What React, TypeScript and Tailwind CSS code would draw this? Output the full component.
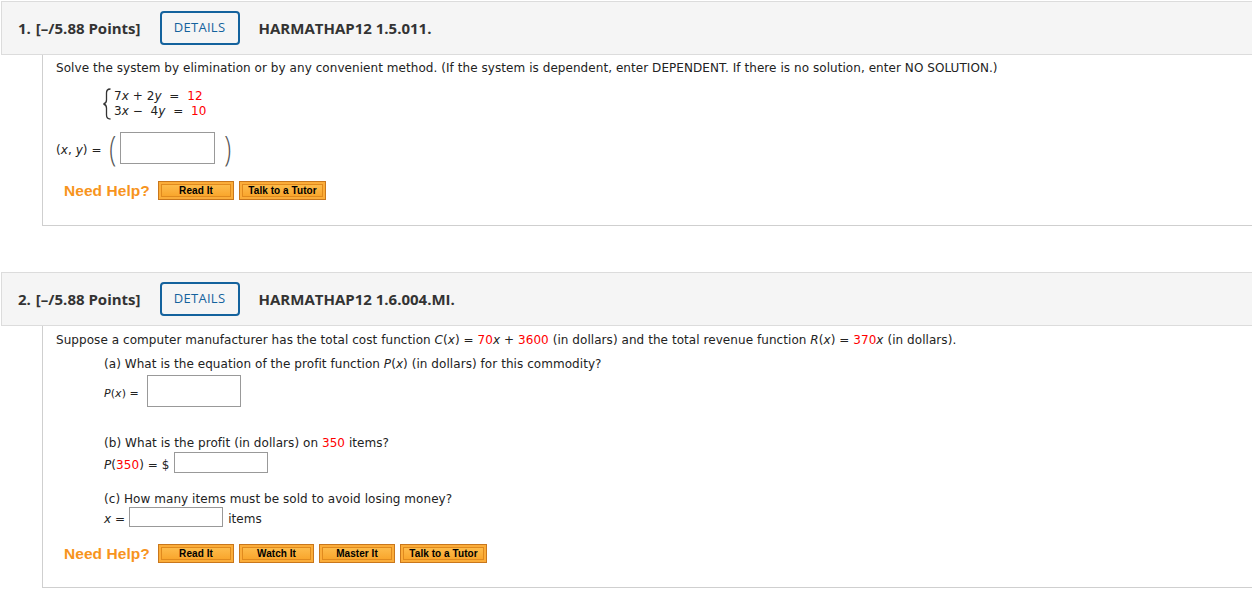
import React from "react";

const body = { fontFamily: '"DejaVu Sans", Verdana, sans-serif' } as const;
const head = { fontFamily: '"Open Sans", "Noto Sans", sans-serif' } as const;
const arial = { fontFamily: '"Liberation Sans", Arial, sans-serif' } as const;

function Header({ num, code }: { num: string; code: string }) {
  return (
    <div
      className="ml-px w-[1262px] h-[54px] bg-[#f5f5f5] border border-[#dcdcdc] flex items-center pl-[16px] text-[#333]"
      style={head}
    >
      <span className="text-[15px] font-bold">{num}.</span>
      <span className="text-[15px] font-bold ml-[5px]">[–/5.88 Points]</span>
      <span className="ml-[19px] h-[34px] w-[80px] border-2 border-[#14629d] rounded-[4px] flex items-center justify-center text-[13px] text-[#14629d] tracking-[0.3px]">
        DETAILS
      </span>
      <span className="ml-[19px] text-[15px] font-bold">{code}</span>
    </div>
  );
}

function HelpBtn({ label, w }: { label: string; w: string }) {
  return (
    <span
      className={`${w} h-[19px] border border-[#c9771c] bg-[#fbad3a] p-[2px] flex`}
      style={arial}
    >
      <span className="flex-1 border border-[#e08a1e] bg-gradient-to-b from-[#fdbb4a] to-[#f9a62c] flex items-center justify-center text-[10px] font-bold text-black leading-none">
        {label}
      </span>
    </span>
  );
}

function NeedHelp({ buttons }: { buttons: { label: string; w: string }[] }) {
  return (
    <div className="flex items-center">
      <span className="text-[15.5px] font-bold text-[#f7941d] ml-[8px] mr-[9px] w-[85px] whitespace-nowrap" style={arial}>
        Need Help?
      </span>
      <div className="flex gap-[5px]">
        {buttons.map((b) => (
          <HelpBtn key={b.label} label={b.label} w={b.w} />
        ))}
      </div>
    </div>
  );
}

const I = ({ children }: { children: React.ReactNode }) => <i className="italic">{children}</i>;
const R = ({ children }: { children: React.ReactNode }) => <span className="text-[#ff0000]">{children}</span>;

function Box({ w, h }: { w: string; h: string }) {
  return <span className={`inline-block ${w} ${h} border border-[#999] bg-white`} />;
}

export default function App() {
  return (
    <div className="w-[1252px] h-[596px] overflow-hidden bg-white text-[#222]" style={body}>
      <div className="pt-px">
        <Header num="1" code="HARMATHAP12 1.5.011." />
        <div className="ml-[42px] w-[1230px] h-[171px] border-l border-b border-[#cfcfcf] pl-[13px] text-[12px] tracking-[0.06px]">
          <div className="pt-[6px] leading-[15px]">
            Solve the system by elimination or by any convenient method. (If the system is dependent, enter DEPENDENT. If there is no solution, enter NO SOLUTION.)
          </div>
          <div className="mt-[12px] ml-[46px] flex items-center">
            <svg width="10" height="32" viewBox="0 0 10 32" className="mr-[2px]">
              <path
                d="M8.5 1 C5 1 4.5 2.5 4.5 5 L4.5 12 C4.5 14.5 3.5 15.5 1.5 16 C3.5 16.5 4.5 17.5 4.5 20 L4.5 27 C4.5 29.5 5 31 8.5 31"
                fill="none"
                stroke="#333"
                strokeWidth="1.3"
              />
            </svg>
            <div className="leading-[15px]">
              <div>
                7<I>x</I> + 2<I>y</I> &nbsp;= &nbsp;<R>12</R>
              </div>
              <div>
                3<I>x</I> − &nbsp;4<I>y</I> &nbsp;= &nbsp;<R>10</R>
              </div>
            </div>
          </div>
          <div className="mt-[14px] flex items-center h-[32px]">
            <span>
              (<I>x</I>, <I>y</I>) =
            </span>
            <span className="ml-[6px] text-[34px] font-extralight text-[#555] leading-none scale-x-75 relative top-[-2px]" style={head}>(</span>
            <span className="ml-[3px]"><Box w="w-[95px]" h="h-[32px]" /></span>
            <span className="ml-[8px] text-[34px] font-extralight text-[#555] leading-none scale-x-75 relative top-[-2px]" style={head}>)</span>
          </div>
          <div className="mt-[13px]">
            <NeedHelp
              buttons={[
                { label: "Read It", w: "w-[76px]" },
                { label: "Talk to a Tutor", w: "w-[87px]" },
              ]}
            />
          </div>
        </div>
      </div>

      <div className="mt-[46px]">
        <Header num="2" code="HARMATHAP12 1.6.004.MI." />
        <div className="ml-[42px] w-[1230px] h-[262px] border-l border-b border-[#cfcfcf] pl-[13px] text-[12px] tracking-[0.06px]">
          <div className="pt-[7px] leading-[15px]">
            Suppose a computer manufacturer has the total cost function <I>C</I>(<I>x</I>) = <R>70</R><I>x</I> + <R>3600</R> (in dollars) and the total revenue function <I>R</I>(<I>x</I>) = <R>370</R><I>x</I> (in dollars).
          </div>
          <div className="ml-[48px]">
            <div className="mt-[9px] leading-[15px]">
              (a) What is the equation of the profit function <I>P</I>(<I>x</I>) (in dollars) for this commodity?
            </div>
            <div className="mt-[6px] flex items-center h-[32px] text-[11px]">
              <span>
                <I>P</I>(<I>x</I>) =
              </span>
              <span className="ml-[8px]"><Box w="w-[94px]" h="h-[32px]" /></span>
            </div>
            <div className="mt-[26px] leading-[15px]">(b) What is the profit (in dollars) on <R>350</R> items?</div>
            <div className="mt-[3px] flex items-center h-[21px]">
              <span>
                <I>P</I>(<R>350</R>) = $
              </span>
              <span className="ml-[5px]"><Box w="w-[94px]" h="h-[21px]" /></span>
            </div>
            <div className="mt-[17px] leading-[15px]">(c) How many items must be sold to avoid losing money?</div>
            <div className="mt-[2px] flex items-center h-[20px]">
              <span>
                <I>x</I> =
              </span>
              <span className="ml-[4px]"><Box w="w-[94px]" h="h-[20px]" /></span>
              <span className="ml-[5px]">items</span>
            </div>
          </div>
          <div className="mt-[13px]">
            <NeedHelp
              buttons={[
                { label: "Read It", w: "w-[76px]" },
                { label: "Watch It", w: "w-[75px]" },
                { label: "Master It", w: "w-[76px]" },
                { label: "Talk to a Tutor", w: "w-[87px]" },
              ]}
            />
          </div>
        </div>
      </div>
    </div>
  );
}
